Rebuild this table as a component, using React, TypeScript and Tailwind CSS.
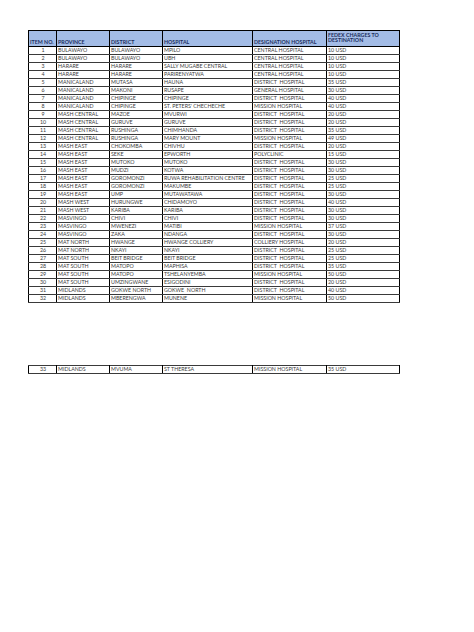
import React from "react";

type Row = [number, string, string, string, string, string];

const rows: Row[] = [
  [1, "BULAWAYO", "BULAWAYO", "MPILO", "CENTRAL HOSPITAL", "10 USD"],
  [2, "BULAWAYO", "BULAWAYO", "UBH", "CENTRAL HOSPITAL", "10 USD"],
  [3, "HARARE", "HARARE", "SALLY MUGABE CENTRAL", "CENTRAL HOSPITAL", "10 USD"],
  [4, "HARARE", "HARARE", "PARIRENYATWA", "CENTRAL HOSPITAL", "10 USD"],
  [5, "MANICALAND", "MUTASA", "HAUNA", "DISTRICT  HOSPITAL", "35 USD"],
  [6, "MANICALAND", "MAKONI", "RUSAPE", "GENERAL HOSPITAL", "30 USD"],
  [7, "MANICALAND", "CHIPINGE", "CHIPINGE", "DISTRICT  HOSPITAL", "40 USD"],
  [8, "MANICALAND", "CHIPINGE", "ST. PETERS' CHECHECHE", "MISSION HOSPITAL", "40 USD"],
  [9, "MASH CENTRAL", "MAZOE", "MVURWI", "DISTRICT  HOSPITAL", "20 USD"],
  [10, "MASH CENTRAL", "GURUVE", "GURUVE", "DISTRICT  HOSPITAL", "20 USD"],
  [11, "MASH CENTRAL", "RUSHINGA", "CHIMHANDA", "DISTRICT  HOSPITAL", "35 USD"],
  [12, "MASH CENTRAL", "RUSHINGA", "MARY MOUNT", "MISSION HOSPITAL", "49 USD"],
  [13, "MASH EAST", "CHOKOMBA", "CHIVHU", "DISTRICT  HOSPITAL", "20 USD"],
  [14, "MASH EAST", "SEKE", "EPWORTH", "POLYCLINIC", "15 USD"],
  [15, "MASH EAST", "MUTOKO", "MUTOKO", "DISTRICT  HOSPITAL", "30 USD"],
  [16, "MASH EAST", "MUDZI", "KOTWA", "DISTRICT  HOSPITAL", "30 USD"],
  [17, "MASH EAST", "GOROMONZI", "RUWA REHABILITATION CENTRE", "DISTRICT  HOSPITAL", "25 USD"],
  [18, "MASH EAST", "GOROMONZI", "MAKUMBE", "DISTRICT  HOSPITAL", "25 USD"],
  [19, "MASH EAST", "UMP", "MUTAWATAWA", "DISTRICT  HOSPITAL", "30 USD"],
  [20, "MASH WEST", "HURUNGWE", "CHIDAMOYO", "DISTRICT  HOSPITAL", "40 USD"],
  [21, "MASH WEST", "KARIBA", "KARIBA", "DISTRICT  HOSPITAL", "30 USD"],
  [22, "MASVINGO", "CHIVI", "CHIVI", "DISTRICT  HOSPITAL", "30 USD"],
  [23, "MASVINGO", "MWENEZI", "MATIBI", "MISSION HOSPITAL", "37 USD"],
  [24, "MASVINGO", "ZAKA", "NDANGA", "DISTRICT  HOSPITAL", "30 USD"],
  [25, "MAT NORTH", "HWANGE", "HWANGE COLLIERY", "COLLIERY HOSPITAL", "20 USD"],
  [26, "MAT NORTH", "NKAYI", "NKAYI", "DISTRICT  HOSPITAL", "25 USD"],
  [27, "MAT SOUTH", "BEIT BRIDGE", "BEIT BRIDGE", "DISTRICT  HOSPITAL", "25 USD"],
  [28, "MAT SOUTH", "MATOPO", "MAPHISA", "DISTRICT  HOSPITAL", "35 USD"],
  [29, "MAT SOUTH", "MATOPO", "TSHELANYEMBA", "MISSION HOSPITAL", "50 USD"],
  [30, "MAT SOUTH", "UMZINGWANE", "ESIGODINI", "DISTRICT  HOSPITAL", "20 USD"],
  [31, "MIDLANDS", "GOKWE NORTH", "GOKWE  NORTH", "DISTRICT  HOSPITAL", "40 USD"],
  [32, "MIDLANDS", "MBERENGWA", "MUNENE", "MISSION HOSPITAL", "50 USD"],
];

const last: Row = [33, "MIDLANDS", "MVUMA", "ST THERESA", "MISSION HOSPITAL", "35 USD"];

const widths = ["w-[28px]", "w-[53px]", "w-[53px]", "w-[90px]", "w-[74px]", "w-[73px]"];

function Cols() {
  return (
    <colgroup>
      {widths.map((w, i) => (
        <col key={i} className={w} />
      ))}
    </colgroup>
  );
}

const td =
  "h-[8px] p-0 pl-[1px] leading-[7px] align-bottom whitespace-pre overflow-visible border-x border-x-black border-y border-y-[#3a3a3a] text-[#3c3c3c]";

function DataRow({ r }: { r: Row }) {
  return (
    <tr>
      <td className={td + " text-center pl-0"}>{r[0]}</td>
      <td className={td}>{r[1]}</td>
      <td className={td}>{r[2]}</td>
      <td className={td}>{r[3]}</td>
      <td className={td}>{r[4]}</td>
      <td className={td}>{r[5]}</td>
    </tr>
  );
}

const th =
  "h-[16px] p-0 pl-[1px] pb-[1px] leading-[5px] align-bottom text-left font-bold text-[#1c2f5e] bg-[#a3bce6] border border-black";

export default function App() {
  return (
    <div
      className="w-[474px] h-[632px] bg-white pt-[30px] pl-[28px] text-[5.3px]"
      style={{ fontFamily: 'Lato, "Liberation Sans", sans-serif' }}
    >
      <table className="table-fixed border-collapse w-[371px]">
        <Cols />
        <thead>
          <tr>
            <th className={th + " text-center pl-0 whitespace-nowrap"}>ITEM NO.</th>
            <th className={th}>PROVINCE</th>
            <th className={th}>DISTRICT</th>
            <th className={th}>HOSPITAL</th>
            <th className={th + " whitespace-nowrap"}>DESIGNATION HOSPITAL</th>
            <th className={th + " align-middle"}>
              FEDEX CHARGES TO
              <br />
              DESTINATION
            </th>
          </tr>
        </thead>
        <tbody>
          {rows.map((r) => (
            <DataRow key={r[0]} r={r} />
          ))}
        </tbody>
      </table>
      <table className="table-fixed border-collapse w-[371px] mt-[62px]">
        <Cols />
        <tbody>
          <DataRow r={last} />
        </tbody>
      </table>
    </div>
  );
}
